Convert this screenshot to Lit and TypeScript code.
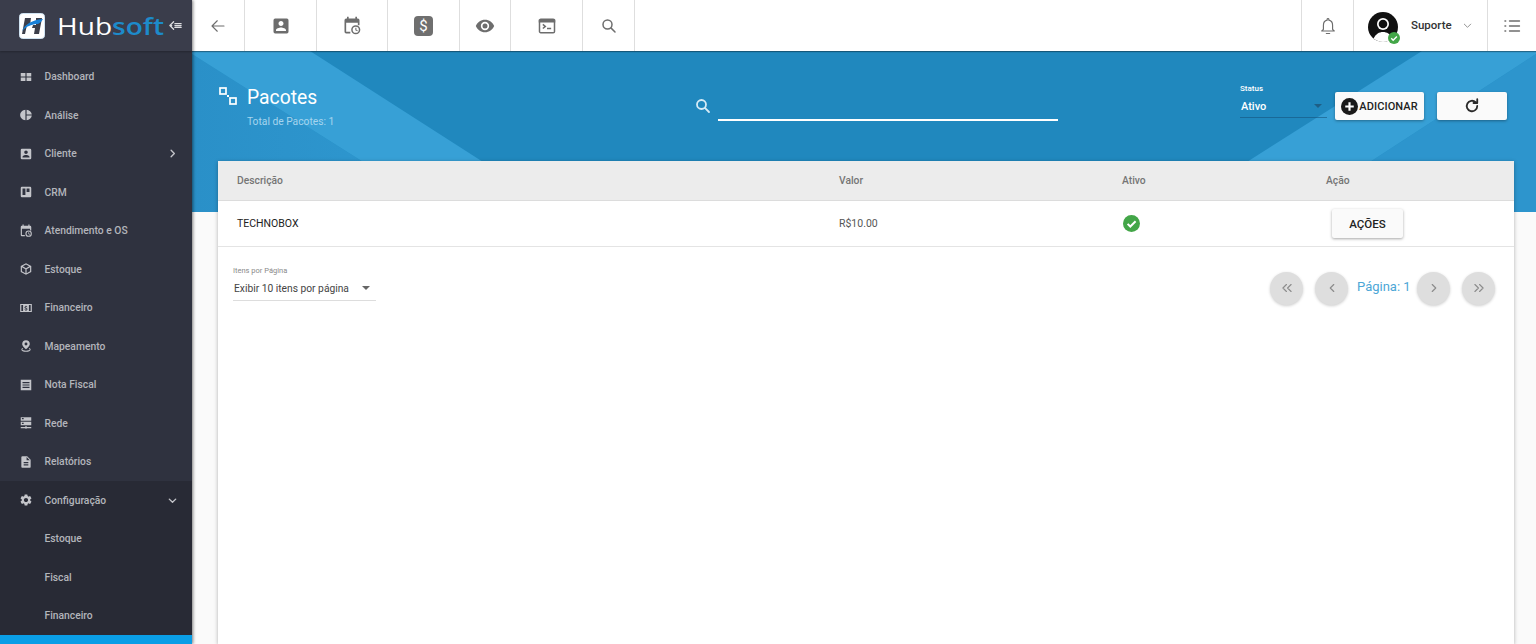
import { LitElement, html, css, svg } from "lit";
import { customElement } from "lit/decorators.js";

const P = {
  grid: svg`<path d="M3 5h8v6H3zM13 5h8v6h-8zM3 13h8v6H3zM13 13h8v6h-8z"/>`,
  pie: svg`<path d="M11 3v18c-5-.4-9-4.300-9-9s4-8.600 9-9zm2 0v8h9c-.5-4.300-4.500-7.700-9-8zm0 10v8c4.500-.3 8.500-3.700 9-8z"/>`,
  box: svg`<path d="M3 5v14a2 2 0 0 0 2 2h14a2 2 0 0 0 2-2V5a2 2 0 0 0-2-2H5a2 2 0 0 0-2 2zm12 4c0 1.660-1.340 3-3 3s-3-1.340-3-3 1.340-3 3-3 3 1.340 3 3zm-9 8c0-2 4-3.100 6-3.100s6 1.100 6 3.100v1H6v-1z"/>`,
  crm: svg`<path fill-rule="evenodd" d="M5 3h14a2 2 0 0 1 2 2v14a2 2 0 0 1-2 2H5a2 2 0 0 1-2-2V5a2 2 0 0 1 2-2zm1 3v11h5V6zm7 0v6h5V6z"/>`,
  cal: svg`<path fill-rule="evenodd" d="M6 1h2v2h8V1h2v2h1a2 2 0 0 1 2 2v6h-2V8H5v11h5v2H5a2 2 0 0 1-2-2V5a2 2 0 0 1 2-2h1zM16.500 11a5.500 5.500 0 1 1 0 11 5.500 5.500 0 0 1 0-11zm0 1.800a3.700 3.700 0 1 0 0 7.400 3.700 3.700 0 0 0 0-7.400zM16 14h1.300v2.400l1.700 1-.6 1-2.400-1.400z"/>`,
  cube: svg`<path fill-rule="evenodd" d="M12 2l9 5v10l-9 5-9-5V7zm0 2.300L6.500 7.400 12 10.500l5.500-3.100zM5 9.100v6.700l6 3.400v-6.700zm14 0l-6 3.400v6.700l6-3.400z"/>`,
  cash: svg`<path fill-rule="evenodd" d="M2 5h20v14H2zm2 2v10h3V7zm13 0v10h3V7zM11.300 8v1.100c-1.100.2-1.900 1-1.900 2 0 1.200 1 1.700 2.200 2 1 .3 1.400.5 1.400 1 0 .4-.4.700-1.100.7-.7 0-1.100-.3-1.200-.8H9.300c.1 1 .9 1.700 2 1.900V17h1.400v-1.100c1.100-.2 1.900-.9 1.900-2 0-1.300-1-1.800-2.200-2.100-1-.3-1.400-.5-1.400-.9s.4-.7 1-.7.900.3 1 .7h1.300c-.1-1-.7-1.600-1.700-1.800V8z"/>`,
  pin: svg`<path fill-rule="evenodd" d="M12 2a6.500 6.500 0 0 1 6.500 6.500c0 4-6.500 9-6.500 9s-6.500-5-6.500-9A6.500 6.500 0 0 1 12 2zm0 4a2.500 2.500 0 1 0 0 5 2.500 2.500 0 0 0 0-5z"/><path d="M6 15.500l1.200 1.300c-1 .4-1.500.8-1.500 1.200 0 1 2.800 2 6.300 2s6.300-1 6.300-2c0-.4-.5-.8-1.500-1.200l1.200-1.300c1.400.6 2 1.500 2 2.500 0 2.200-3.600 4-8 4s-8-1.800-8-4c0-1 .6-1.900 2-2.500z"/>`,
  note: svg`<path fill-rule="evenodd" d="M3 3h18v18H3zm3 4v2h12V7zm0 4v2h12v-2zm0 4v2h12v-2z"/>`,
  net: svg`<path fill-rule="evenodd" d="M3 2h18v6H3zm0 8h18v6H3zm2-6.500v2h3v-2zm0 8v2h3v-2zM11 17h2v2h8v2h-8v1h-2v-1H3v-2h8z"/>`,
  file: svg`<path d="M14 2H6a2 2 0 0 0-2 2v16c0 1.100.9 2 2 2h12a2 2 0 0 0 2-2V8l-6-6zm2 16H8v-2h8v2zm0-4H8v-2h8v2zm-3-5V3.500L18.500 9H13z"/>`,
  gear: svg`<path d="M19.140 12.940c.04-.3.06-.61.06-.94 0-.32-.02-.64-.07-.94l2.030-1.580a.49.49 0 0 0 .12-.61l-1.920-3.320a.488.488 0 0 0-.59-.22l-2.390.96c-.5-.38-1.030-.7-1.620-.94l-.36-2.540a.484.484 0 0 0-.48-.41h-3.840c-.24 0-.43.17-.47.41l-.36 2.540c-.59.24-1.130.57-1.620.94l-2.390-.96c-.22-.08-.47 0-.59.22L2.740 8.870c-.12.21-.08.47.12.61l2.030 1.580c-.05.3-.09.63-.09.94s.02.64.07.94l-2.030 1.580a.49.49 0 0 0-.12.61l1.920 3.320c.12.22.37.29.59.22l2.390-.96c.5.38 1.030.7 1.620.94l.36 2.540c.05.24.24.41.48.41h3.840c.24 0 .44-.17.47-.41l.36-2.540c.59-.24 1.130-.56 1.620-.94l2.390.96c.22.08.47 0 .59-.22l1.920-3.320c.12-.22.07-.47-.12-.61l-2.010-1.580zM12 15.600c-1.980 0-3.600-1.620-3.600-3.600s1.620-3.600 3.600-3.600 3.600 1.620 3.600 3.600-1.620 3.600-3.600 3.600z"/>`,
};

const ico = (p: unknown, cls = "") => html`<svg class=${cls} viewBox="0 0 24 24" fill="currentColor">${p}</svg>`;
const line = (d: string, cls = "", w = 2) =>
  html`<svg class=${cls} viewBox="0 0 24 24" fill="none" stroke="currentColor" stroke-width=${w} stroke-linecap="round" stroke-linejoin="round"><path d=${d}/></svg>`;

const CHECK = svg`<circle cx="12" cy="12" r="12" fill="#43a648"/><path d="M6.500 12.500l3.800 3.800 7.500-7.500" fill="none" stroke="#fff" stroke-width="2.800"/>`;

const NAV: [string, unknown, string?][] = [
  ["Dashboard", P.grid],
  ["Análise", P.pie],
  ["Cliente", P.box, "right"],
  ["CRM", P.crm],
  ["Atendimento e OS", P.cal],
  ["Estoque", P.cube],
  ["Financeiro", P.cash],
  ["Mapeamento", P.pin],
  ["Nota Fiscal", P.note],
  ["Rede", P.net],
  ["Relatórios", P.file],
];

@customElement("app-root")
export class AppRoot extends LitElement {
  static styles = css`
    * { box-sizing: border-box; }
    :host { display: flex; width: 100%; height: 100vh; overflow: hidden; background: #fafafa;
      font-family: Roboto, "Liberation Sans", sans-serif; color: #222; }
    svg { display: block; flex: none; }

    .side { width: 192px; flex: none; height: 100%; overflow: hidden; background: #2f323f; display: flex;
      flex-direction: column; box-shadow: 1px 0 3px rgba(0,0,0,.5); position: relative; z-index: 3; }
    .brand { height: 51px; flex: none; background: #3a3d4b; display: flex; align-items: center; padding-left: 19px;
      box-shadow: 0 1px 2px rgba(0,0,0,.25); }
    .logo { width: 26px; height: 26px; border-radius: 3px; }
    .word { margin-left: 12px; width: 112px; height: 26px; white-space: nowrap; }
    .word span { display: inline-block; font-size: 23px; font-weight: 400; letter-spacing: 0; color: #fff; line-height: 26px;
      font-family: "Open Sans", Roboto, sans-serif; transform: scaleX(1.22); transform-origin: left center; }
    .word b { color: #1d8bca; font-weight: 600; }
    .collapse { width: 15px; height: 15px; color: #dcdde0; margin-left: -1px; }
    .nav { padding-top: 6.500px; }
    .item { height: 38.5px; display: flex; align-items: center; padding-left: 18.500px; color: #b3b5bb;
      font-size: 10.300px; font-weight: 500; }
    .item .i { width: 14px; height: 14px; margin-right: 12px; color: #c4c5ca; }
    .item .c { width: 11px; height: 11px; margin-left: auto; margin-right: 14px; color: #c4c5ca; }
    .sub { background: #282a35; flex: 1; }
    .sub .item.child { padding-left: 44.500px; }
    .active { height: 12px; background: #0a9ee6; }

    .main { flex: 1; min-width: 0; display: flex; flex-direction: column; }
    .top { height: 51px; flex: none; background: #fff; display: flex; position: relative; z-index: 2;
      box-shadow: 0 1px 1px rgba(0,0,0,.35); color: #6d6d6d; }
    .cell { display: flex; align-items: center; justify-content: center; border-right: 1px solid #dedede; }
    .w53 { width: 53px; } .w52 { width: 52px; } .w71 { width: 71px; } .w72 { width: 72px; } .w51 { width: 51px; }
    .top .s { width: 18px; height: 18px; }
    .top .m { width: 20px; height: 20px; }
    .dollar { width: 19px; height: 20px; border-radius: 4px; background: #6f6f6f; color: #fff; font-size: 15px;
      font-weight: 400; display: flex; align-items: center; justify-content: center; }
    .grow { flex: 1; border-right: 1px solid #dedede; }
    .user { width: 134px; border-right: 1px solid #dedede; display: flex; align-items: center; padding-left: 14px; }
    .av { position: relative; width: 30px; height: 30px; flex: none; margin-top: 2px; }
    .badge { position: absolute; left: 20px; top: 20px; width: 12px; height: 12px; }
    .uname { margin: 0 0 2px 13px; font-size: 11.500px; font-weight: 500; color: #333; }
    .uc { width: 11px; height: 11px; margin: 0 0 1px 10px; color: #8a8a8a; }
    .w48 { width: 48px; border: 0; }

    .body { flex: 1; min-height: 0; display: flex; flex-direction: column; position: relative; }
    .bg { position: absolute; left: 0; top: 0; width: 100%; height: 161px; }
    .hero { height: 110px; flex: none; position: relative; display: flex; align-items: flex-start; color: #fff; }
    .title { width: 476px; padding: 36px 0 0 27px; display: flex; flex: none; }
    .title svg { width: 18px; height: 18px; margin: 0 10px 0 0; }
    .title h1 { margin: 0; font-size: 19.300px; font-weight: 400; line-height: 22px; }
    .title p { margin: 7px 0 0; font-size: 10.250px; line-height: 12px; color: #a6d5ee; }
    .search { display: flex; width: 364px; flex: none; height: 70px; align-items: flex-end; margin-left: 26px; }
    .search svg { width: 18px; height: 18px; color: #d6ebf6; margin: 0 6px 6px 0; }
    .search div { width: 340px; border-bottom: 2px solid #fff; height: 40px; }
    .status { margin-left: 182px; width: 87px; flex: none; margin-top: 33px; }
    .status label { display: block; font-size: 8px; font-weight: 500; line-height: 9px; color: #fff; }
    .sel { display: flex; justify-content: space-between; align-items: center; height: 25px; padding: 2px 5px 0 1px;
      border-bottom: 1px solid rgba(20,80,120,.55); font-size: 11px; font-weight: 500; }
    .caret { width: 0; height: 0; border: 4px solid transparent; border-top-color: #1e5f86; border-bottom: 0; }
    .btn { background: #fafafa; border-radius: 2px; box-shadow: 0 1px 3px rgba(0,0,0,.35); height: 28px; display: flex;
      align-items: center; justify-content: center; flex: none; margin-top: 41px; color: #222; }
    .add { width: 89px; margin-left: 8px; font-size: 11px; font-weight: 500; letter-spacing: .1px; }
    .add svg { width: 17px; height: 17px; margin-right: 1px; }
    .ref { width: 70px; margin-left: 13px; }
    .ref svg { width: 18px; height: 18px; color: #2a2a2a; }

    .card { flex: 1; position: relative; margin: 0 22px 0 26px; background: #fff; box-shadow: 0 1px 4px rgba(0,0,0,.3); }
    .row { display: grid; grid-template-columns: 602px 283px 204px 1fr; padding-left: 19px; align-items: center; }
    .head { height: 40px; background: #ececec; border-bottom: 1px solid #dcdcdc; font-size: 10.300px; font-weight: 500; color: #757575; }
    .data { height: 46px; border-bottom: 1px solid #e4e4e4; font-size: 10.500px; color: #222; }
    .val { color: #555; }
    .ok { width: 17px; height: 17px; margin-left: 1px; }
    .acts { margin-left: 6px; width: 71px; height: 29px; background: #fafafa; border-radius: 2px; box-shadow: 0 1px 3px rgba(0,0,0,.35);
      display: flex; align-items: center; justify-content: center; font-size: 11.500px; font-weight: 500; color: #222; }
    .foot { display: flex; padding: 19px 19px 0 15px; align-items: flex-start; }
    .per { width: 143px; }
    .per label { display: block; font-size: 7.500px; line-height: 9px; color: #8a8a8a; }
    .psel { height: 26px; display: flex; align-items: center; justify-content: space-between; padding: 1px 6px 0 1px;
      border-bottom: 1px solid #ddd; font-size: 10.250px; color: #444; }
    .psel .caret { border-top-color: #666; }
    .pager { margin-left: auto; margin-top: 5.500px; display: flex; align-items: center; }
    .pg { width: 33px; height: 33px; border-radius: 50%; background: #dedede; box-shadow: 0 1px 3px rgba(0,0,0,.2);
      display: flex; align-items: center; justify-content: center; color: #8c8c8c; }
    .pg svg { width: 14px; height: 14px; }
    .pg + .pg { margin-left: 12px; }
    .plabel { margin: -4px 7px 0 9px; font-size: 13px; color: #4ca6d6; white-space: nowrap; width: 53px; }
  `;

  render() {
    return html`
      <aside class="side">
        <div class="brand">
          <svg class="logo" viewBox="0 0 26 26">
            <rect x=".5" y=".5" width="25" height="25" rx="3" fill="#fff" stroke="#cfe3f2"/>
            <path d="M6 5h6l-1 7H8l-2 9H3zM17 5h6l-3 16h-5l1-6h-3l1-3h3z" fill="#3c3f4b"/>
            <path d="M3 18C6 11 13 7 24 6c-2 3-3 4-5 5-6 0-11 2-16 7z" fill="#1780d8"/>
          </svg>
          <div class="word"><span>Hub<b>soft</b></span></div>
          ${line("M9 6L3 12l6 6M3 12h3M11 9h10M11 12h10M11 15h10", "collapse", 2)}
        </div>
        <div class="nav">
          ${NAV.map(([t, p, c]) => html`<div class="item">${ico(p, "i")}<span>${t}</span>
            ${c ? line("M9 5l7 7-7 7", "c", 3) : ""}</div>`)}
        </div>
        <div class="sub">
          <div class="item">${ico(P.gear, "i")}<span>Configuração</span>${line("M5 9l7 7 7-7", "c", 3)}</div>
          <div class="item child">Estoque</div>
          <div class="item child">Fiscal</div>
          <div class="item child">Financeiro</div>
          <div class="active"></div>
        </div>
      </aside>
      <div class="main">
        <header class="top">
          <div class="cell w53">${line("M20 12H5M11 5l-7 7 7 7", "s", 1.500)}</div>
          <div class="cell w72">${ico(P.box, "m")}</div>
          <div class="cell w71">${ico(P.cal, "m")}</div>
          <div class="cell w72"><div class="dollar">$</div></div>
          <div class="cell w51"><svg class="m" viewBox="0 0 24 24" fill="currentColor"><path d="M12 4.500C7 4.500 2.700 7.600 1 12c1.700 4.400 6 7.500 11 7.500s9.300-3.100 11-7.500c-1.700-4.400-6-7.500-11-7.500zM12 17a5 5 0 1 1 0-10 5 5 0 0 1 0 10zm0-8a3 3 0 1 0 0 6 3 3 0 0 0 0-6z"/></svg></div>
          <div class="cell w72"><svg class="m" viewBox="0 0 24 24" fill="none" stroke="currentColor" stroke-width="1.800"><rect x="3" y="4" width="18" height="16" rx="1.500"/><path d="M3 5h18v2H3z" fill="currentColor"/><path d="M7 10l3 2.500L7 15M12 15h5"/></svg></div>
          <div class="cell w52">${line("M10 16a6 6 0 1 1 0-12 6 6 0 0 1 0 12zM14.500 14.500L20 20", "s", 2)}</div>
          <div class="grow"></div>
          <div class="cell w52">${line("M12 3a1 1 0 0 1 1 1v1c3 .6 4.500 3 4.500 6v5l2 2H4.500l2-2v-5c0-3 1.500-5.400 4.500-6V4a1 1 0 0 1 1-1zM10 21h4", "m", 1.400)}</div>
          <div class="user">
            <div class="av">
              <svg viewBox="0 0 30 30" width="30" height="30"><circle cx="15" cy="15" r="15" fill="#111"/><circle cx="15" cy="12" r="6" fill="#fff"/><circle cx="15" cy="12" r="4.300" fill="#111"/><path d="M5.500 26.500C8 22 11 20 15 20s7 2 9.500 6.500A15 15 0 0 1 15 30a15 15 0 0 1-9.500-3.500z" fill="#fff"/></svg>
              <svg class="badge" viewBox="0 0 24 24">${CHECK}</svg>
            </div>
            <span class="uname">Suporte</span>
            ${line("M5 9l7 7 7-7", "uc", 2)}
          </div>
          <div class="cell w48">${line("M9 6h12M9 12h12M9 18h12M3.500 6h1M3.500 12h1M3.500 18h1", "m", 1.600)}</div>
        </header>
        <div class="body">
          <svg class="bg" viewBox="0 0 1344 161" preserveAspectRatio="none">
            <defs>
              <linearGradient id="l" x1="0" y1="0" x2="1" y2="0"><stop offset="0" stop-color="#2a90c8"/><stop offset="1" stop-color="#2f98d0"/></linearGradient>
            </defs>
            <rect width="1344" height="161" fill="#2088be"/>
            <path d="M0 3L168 109L248 161H0z" fill="url(#l)"/>
            <path d="M1344 3L1181 109L1100 161H1344z" fill="#2d95cd"/>
            <path d="M0 3L-10 0H118L288 109L370 161H248L168 109z" fill="#37a0d6"/>
            <path d="M1230 0H1344V3L1181 109L1100 161H982L1058 109z" fill="#37a0d6"/>
          </svg>
          <section class="hero">
            <div class="title">
              <svg viewBox="0 0 18 18" fill="none" stroke="#fff" stroke-width="1.700"><rect x="1" y="1" width="6" height="6"/><rect x="11" y="11" width="6" height="6"/><path d="M8 8h2v2H8z" fill="#fff" stroke="none"/></svg>
              <div><h1>Pacotes</h1><p>Total de Pacotes: 1</p></div>
            </div>
            <div class="search">
              ${line("M10 16a6 6 0 1 1 0-12 6 6 0 0 1 0 12zM14.500 14.500L20 20", "", 2.400)}
              <div></div>
            </div>
            <div class="status">
              <label>Status</label>
              <div class="sel"><span>Ativo</span><i class="caret"></i></div>
            </div>
            <div class="btn add">
              <svg viewBox="0 0 24 24"><circle cx="12" cy="12" r="12" fill="#1a1a1a"/><path d="M12 6v12M6 12h12" stroke="#fff" stroke-width="3"/></svg>
              ADICIONAR
            </div>
            <div class="btn ref">${line("M19 12a7 7 0 1 1-2.200-5.100M19 3v5h-5", "", 2.400)}</div>
          </section>
          <section class="card">
            <div class="row head"><span>Descrição</span><span>Valor</span><span>Ativo</span><span>Ação</span></div>
            <div class="row data">
              <span>TECHNOBOX</span>
              <span class="val">R$10.00</span>
              <svg class="ok" viewBox="0 0 24 24">${CHECK}</svg>
              <div class="acts">AÇÕES</div>
            </div>
            <div class="foot">
              <div class="per">
                <label>Itens por Página</label>
                <div class="psel"><span>Exibir 10 itens por página</span><i class="caret"></i></div>
              </div>
              <div class="pager">
                <div class="pg">${line("M11 6L5 12l6 6M19 6l-6 6 6 6")}</div>
                <div class="pg">${line("M15 6l-6 6 6 6")}</div>
                <span class="plabel">Página: 1</span>
                <div class="pg">${line("M9 6l6 6-6 6")}</div>
                <div class="pg">${line("M5 6l6 6-6 6M13 6l6 6-6 6")}</div>
              </div>
            </div>
          </section>
        </div>
      </div>
    `;
  }
}
